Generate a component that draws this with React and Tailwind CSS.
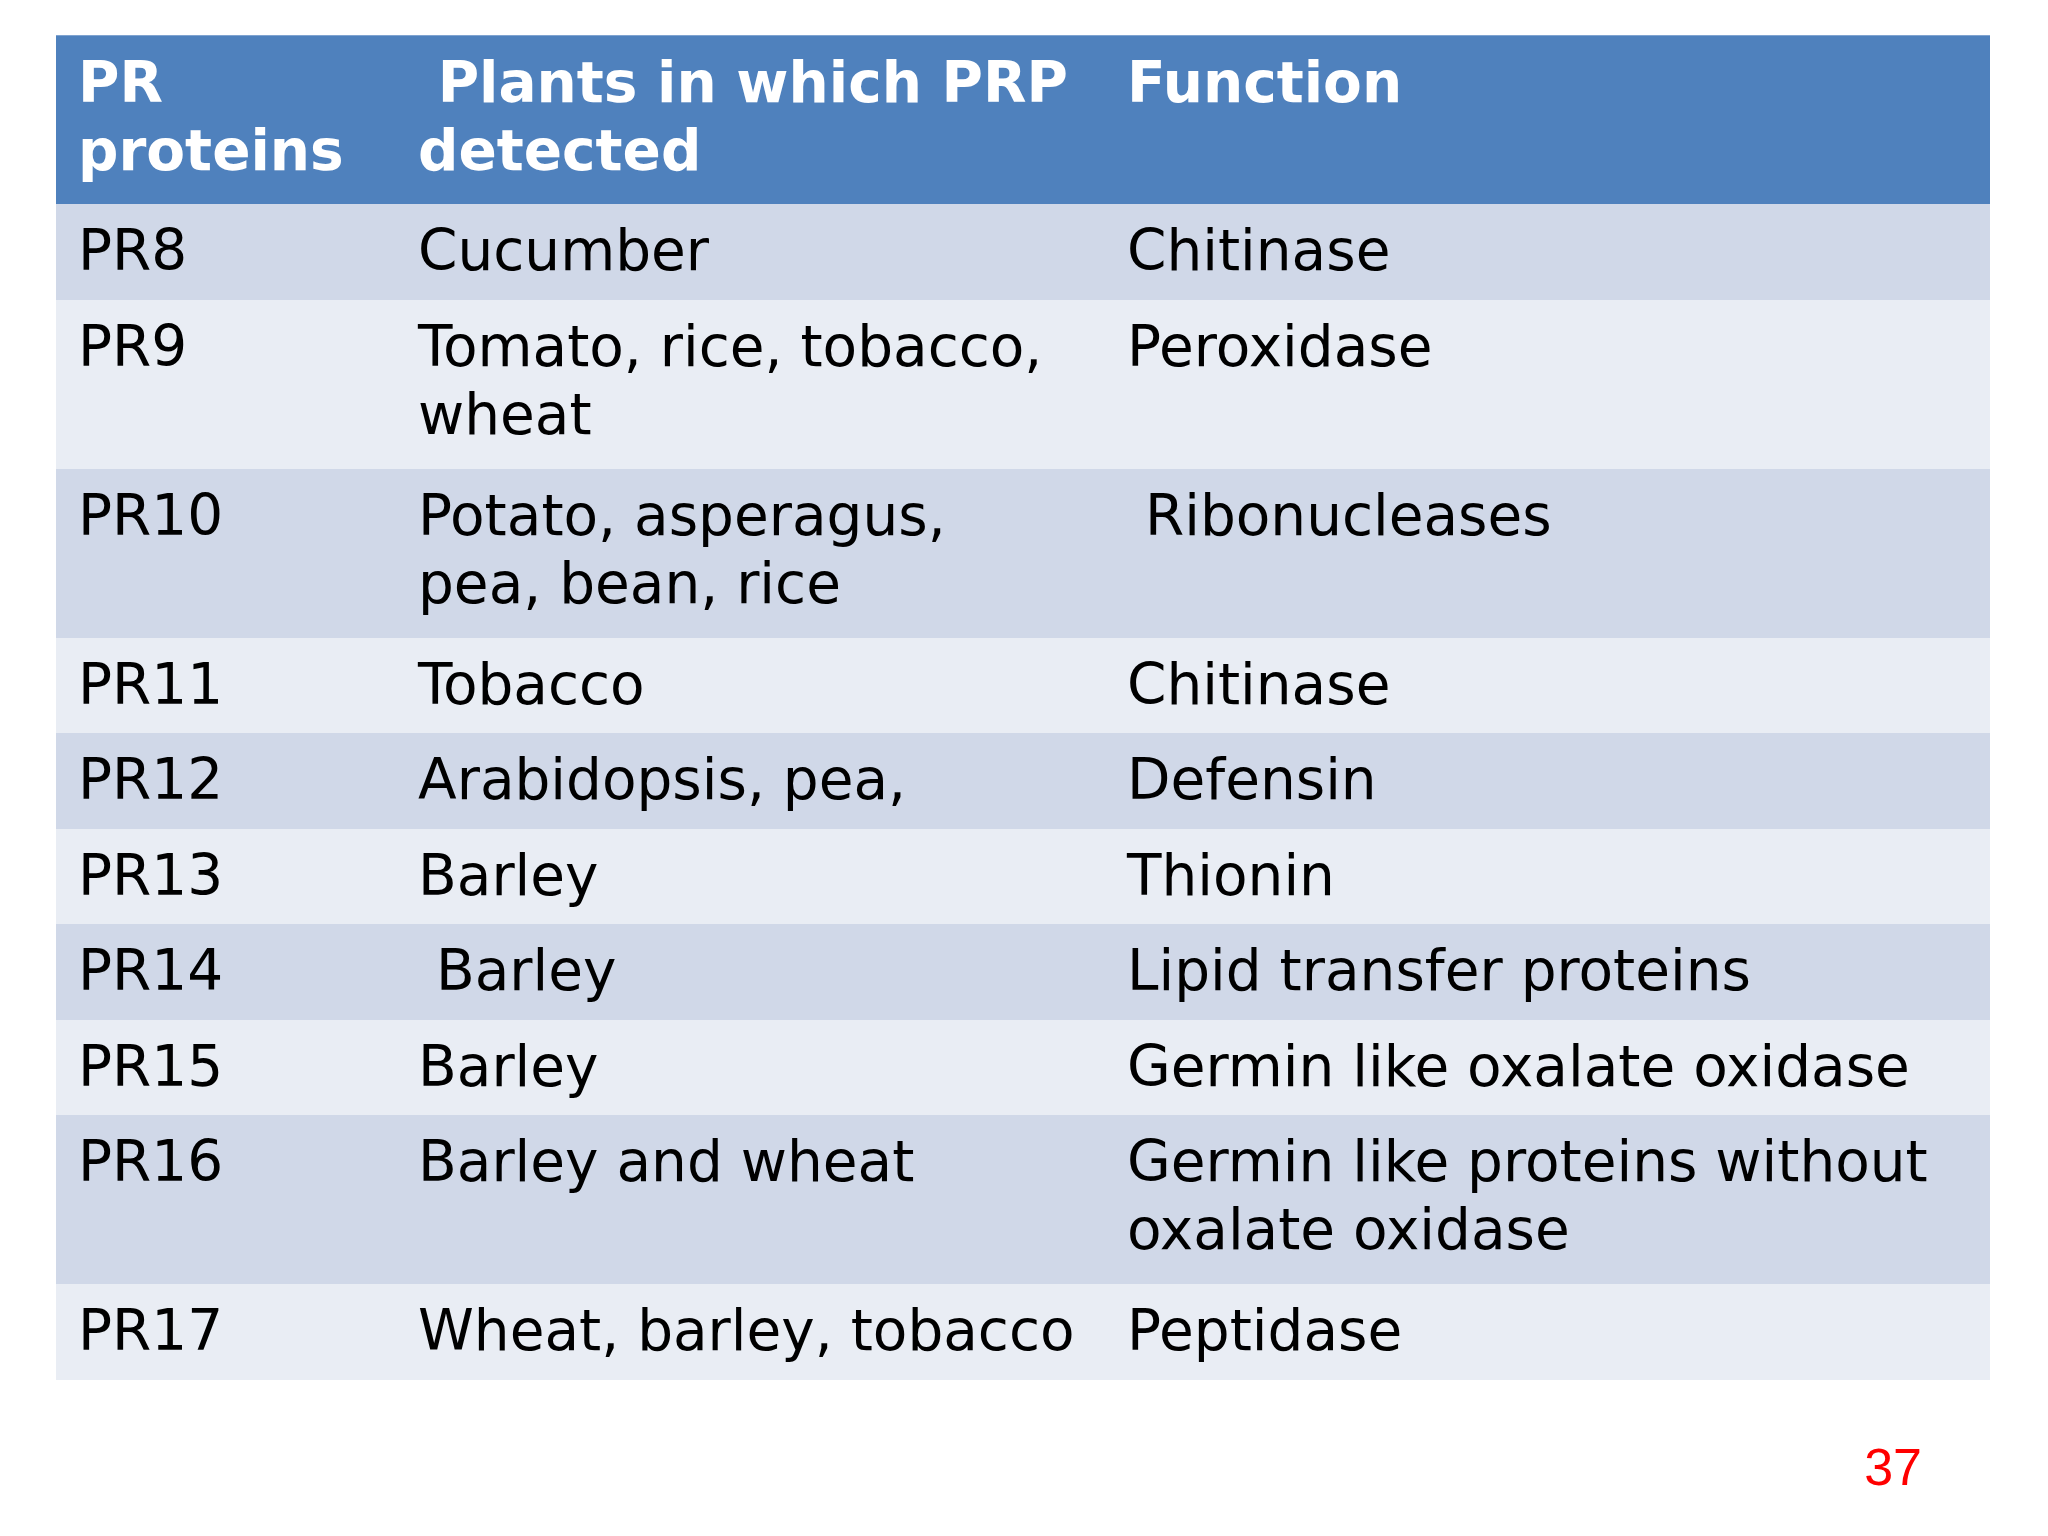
import React from "react";

const rows = [
	{ pr: "PR8", plants: ["Cucumber"], fn: ["Chitinase"] },
	{ pr: "PR9", plants: ["Tomato, rice, tobacco,", "wheat"], fn: ["Peroxidase"] },
	{ pr: "PR10", plants: ["Potato, asperagus,", "pea, bean, rice"], fn: [" Ribonucleases"] },
	{ pr: "PR11", plants: ["Tobacco"], fn: ["Chitinase"] },
	{ pr: "PR12", plants: ["Arabidopsis, pea,"], fn: ["Defensin"] },
	{ pr: "PR13", plants: ["Barley"], fn: ["Thionin"] },
	{ pr: "PR14", plants: [" Barley"], fn: ["Lipid transfer proteins"] },
	{ pr: "PR15", plants: ["Barley"], fn: ["Germin like oxalate oxidase"] },
	{ pr: "PR16", plants: ["Barley and wheat"], fn: ["Germin like proteins without", "oxalate oxidase"] },
	{ pr: "PR17", plants: ["Wheat, barley, tobacco"], fn: ["Peptidase"] },
];

const Lines = ({ lines }) =>
	lines.map((l, i) => (
		<div key={i} className="whitespace-pre">
			{l}
		</div>
	));

export default function App() {
	return (
		<div className="w-[2048px] h-[1536px] bg-white overflow-hidden pt-[35px] px-[56px] font-['DejaVu_Sans',Verdana,sans-serif] text-[56.5px] leading-[68px]">
			<div className="w-[1934px]">
				<div className="grid grid-cols-[340px_709px_885px] h-[169px] bg-[#4f81bd] border-t border-[#7fa3d0] text-white font-bold">
					<div className="pl-[22px] pt-[13px]">
						<Lines lines={["PR", "proteins"]} />
					</div>
					<div className="pl-[22px] pt-[13px]">
						<Lines lines={[" Plants in which PRP", "detected"]} />
					</div>
					<div className="pl-[22px] pt-[13px]">
						<Lines lines={["Function"]} />
					</div>
				</div>
				{rows.map((r, i) => {
					const tall = r.plants.length > 1 || r.fn.length > 1;
					return (
						<div
							key={r.pr}
							className={`grid grid-cols-[340px_709px_885px] text-black ${
								i % 2 === 0 ? "bg-[#d0d8e8]" : "bg-[#e9edf4]"
							} ${tall ? "h-[169px]" : "h-[95.5px]"}`}
						>
							<div className="pl-[22px] pt-[13px]">{r.pr}</div>
							<div className="pl-[22px] pt-[13px]">
								<Lines lines={r.plants} />
							</div>
							<div className="pl-[22px] pt-[13px]">
								<Lines lines={r.fn} />
							</div>
						</div>
					);
				})}
			</div>
			<div className="flex justify-end pr-[70px] mt-[57px]">
				<span className="font-['Liberation_Sans',Arial,sans-serif] text-[52px] leading-[60px] text-[#ff0000]">
					37
				</span>
			</div>
		</div>
	);
}
